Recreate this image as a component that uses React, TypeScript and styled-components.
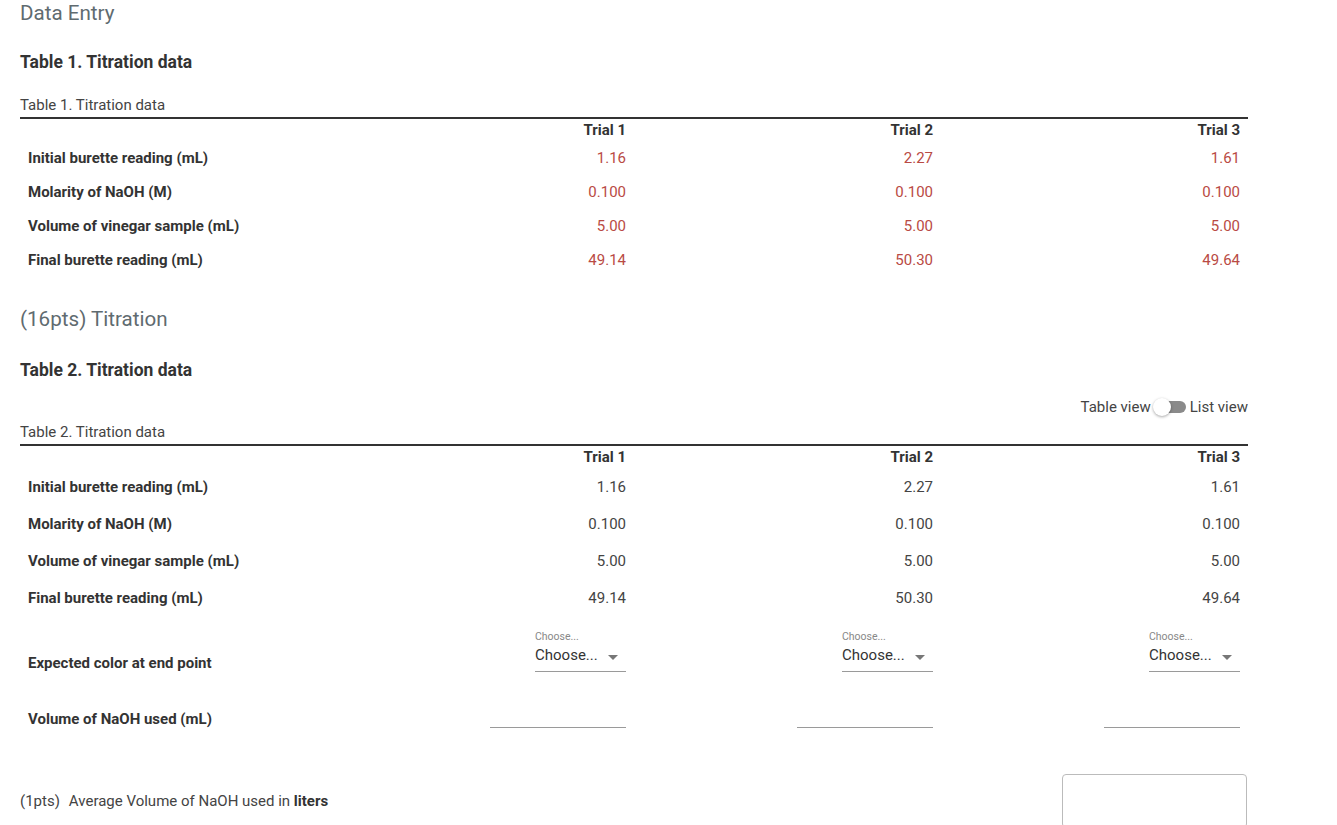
import React from "react";
import styled, { createGlobalStyle } from "styled-components";

const Global = createGlobalStyle`
  html, body { margin: 0; padding: 0; background: #fff; }
  body { font-family: Roboto, "Liberation Sans", Arial, sans-serif; color: #333; }
`;

const Page = styled.div`
  padding: 0 0 0 20px;
  width: 1228px;
`;

const SectionTitle = styled.h2<{ $top?: number }>`
  margin: ${(p) => p.$top ?? 0}px 0 0 0;
  font-size: 20.6px;
  line-height: 26px;
  font-weight: 400;
  color: #5f6b70;
`;

const TableTitle = styled.h3<{ $top: number }>`
  margin: ${(p) => p.$top}px 0 0 0;
  font-size: 17.5px;
  line-height: 22px;
  font-weight: 700;
  color: #333;
`;

const ToggleRow = styled.div`
  margin-top: 16px;
  display: flex;
  justify-content: flex-end;
  align-items: center;
  font-size: 15px;
  line-height: 20px;
  color: #444;
`;

const Track = styled.span`
  position: relative;
  display: inline-block;
  width: 23px;
  height: 12px;
  border-radius: 0 6px 6px 0;
  background: #8a8a8a;
  margin: 0 4px 0 12px;
`;

const Knob = styled.span`
  position: absolute;
  left: -10px;
  top: -3px;
  width: 18px;
  height: 18px;
  border-radius: 50%;
  background: #fff;
  box-shadow: 0 1px 3px rgba(0, 0, 0, 0.35);
`;

const Table = styled.table<{ $top: number }>`
  margin-top: ${(p) => p.$top}px;
  width: 1228px;
  border-collapse: collapse;
  table-layout: fixed;
  font-size: 15px;
`;

const Caption = styled.caption`
  caption-side: top;
  text-align: left;
  font-size: 15px;
  line-height: 20px;
  color: #444;
  padding: 2px 0 2px 0;
  border-bottom: 1px solid #333;
`;

const HeadCell = styled.th`
  text-align: right;
  font-weight: 700;
  color: #333;
  padding: 0 8px;
  height: 22px;
  line-height: 20px;
  border-top: 1px solid #333;
`;

const Row = styled.tr<{ $h: number }>`
  height: ${(p) => p.$h}px;
`;

const LabelCell = styled.td<{ $pt?: number }>`
  font-weight: 700;
  color: #333;
  padding: ${(p) => p.$pt ?? 0}px 8px 0 8px;
  line-height: 20px;
  vertical-align: middle;
`;

const ValueCell = styled.td<{ $red?: boolean }>`
  text-align: right;
  padding: 0 8px;
  line-height: 20px;
  color: ${(p) => (p.$red ? "#b94a44" : "#444")};
  vertical-align: middle;
`;

const ControlCell = styled.td<{ $pb?: number }>`
  padding: 0 8px ${(p) => p.$pb ?? 0}px 8px;
  vertical-align: middle;
`;

const SelectWrap = styled.div`
  margin-left: auto;
  width: 91px;
  border-bottom: 1px solid #9a9a9a;
`;

const SelectLabel = styled.div`
  font-size: 10.5px;
  line-height: 16px;
  color: #888;
`;

const SelectValue = styled.div`
  display: flex;
  align-items: center;
  justify-content: space-between;
  font-size: 15px;
  line-height: 20px;
  color: #333;
  padding-bottom: 6px;
  padding-right: 8px;
`;

const Arrow = styled.span`
  width: 0;
  height: 0;
  border-left: 5px solid transparent;
  border-right: 5px solid transparent;
  border-top: 5px solid #777;
  margin-top: 6px;
`;

const TextInput = styled.div`
  margin-left: auto;
  width: 136px;
  height: 18px;
  border-bottom: 1px solid #9a9a9a;
`;

const AnswerRow = styled.div`
  margin-top: 33px;
  display: flex;
  justify-content: space-between;
  align-items: center;
  width: 1227px;
`;

const AnswerText = styled.div`
  font-size: 15px;
  color: #444;
  display: flex;
  gap: 9px;
  b { color: #333; }
`;

const AnswerBox = styled.div`
  width: 183px;
  height: 52px;
  border: 1px solid #bbb;
  border-radius: 4px;
`;

const labels = [
  "Initial burette reading (mL)",
  "Molarity of NaOH (M)",
  "Volume of vinegar sample (mL)",
  "Final burette reading (mL)",
];
const data = [
  ["1.16", "2.27", "1.61"],
  ["0.100", "0.100", "0.100"],
  ["5.00", "5.00", "5.00"],
  ["49.14", "50.30", "49.64"],
];

const Select = () => (
  <SelectWrap>
    <SelectLabel>Choose...</SelectLabel>
    <SelectValue>
      <span>Choose...</span>
      <Arrow />
    </SelectValue>
  </SelectWrap>
);

export default function App() {
  return (
    <>
      <Global />
      <Page>
        <SectionTitle>Data Entry</SectionTitle>
        <TableTitle $top={25}>Table 1. Titration data</TableTitle>
        <Table $top={20}>
          <Caption>Table 1. Titration data</Caption>
          <thead>
            <tr>
              <HeadCell />
              <HeadCell>Trial 1</HeadCell>
              <HeadCell>Trial 2</HeadCell>
              <HeadCell>Trial 3</HeadCell>
            </tr>
          </thead>
          <tbody>
            {labels.map((l, i) => (
              <Row key={l} $h={34}>
                <LabelCell>{l}</LabelCell>
                {data[i].map((v, j) => (
                  <ValueCell key={j} $red>
                    {v}
                  </ValueCell>
                ))}
              </Row>
            ))}
          </tbody>
        </Table>

        <SectionTitle $top={29}>(16pts) Titration</SectionTitle>
        <TableTitle $top={27}>Table 2. Titration data</TableTitle>
        <ToggleRow>
          <span>Table view</span>
          <Track>
            <Knob />
          </Track>
          <span>List view</span>
        </ToggleRow>
        <Table $top={3}>
          <Caption>Table 2. Titration data</Caption>
          <thead>
            <tr>
              <HeadCell />
              <HeadCell>Trial 1</HeadCell>
              <HeadCell>Trial 2</HeadCell>
              <HeadCell>Trial 3</HeadCell>
            </tr>
          </thead>
          <tbody>
            {labels.map((l, i) => (
              <Row key={l} $h={37}>
                <LabelCell>{l}</LabelCell>
                {data[i].map((v, j) => (
                  <ValueCell key={j}>{v}</ValueCell>
                ))}
              </Row>
            ))}
            <Row $h={80}>
              <LabelCell $pt={14}>Expected color at end point</LabelCell>
              {[0, 1, 2].map((j) => (
                <ControlCell key={j} $pb={12}>
                  <Select />
                </ControlCell>
              ))}
            </Row>
            <Row $h={45}>
              <LabelCell>Volume of NaOH used (mL)</LabelCell>
              {[0, 1, 2].map((j) => (
                <ControlCell key={j}>
                  <TextInput />
                </ControlCell>
              ))}
            </Row>
          </tbody>
        </Table>
        <AnswerRow>
          <AnswerText>
            <span>(1pts)</span>
            <span>
              Average Volume of NaOH used in <b>liters</b>
            </span>
          </AnswerText>
          <AnswerBox />
        </AnswerRow>
      </Page>
    </>
  );
}
